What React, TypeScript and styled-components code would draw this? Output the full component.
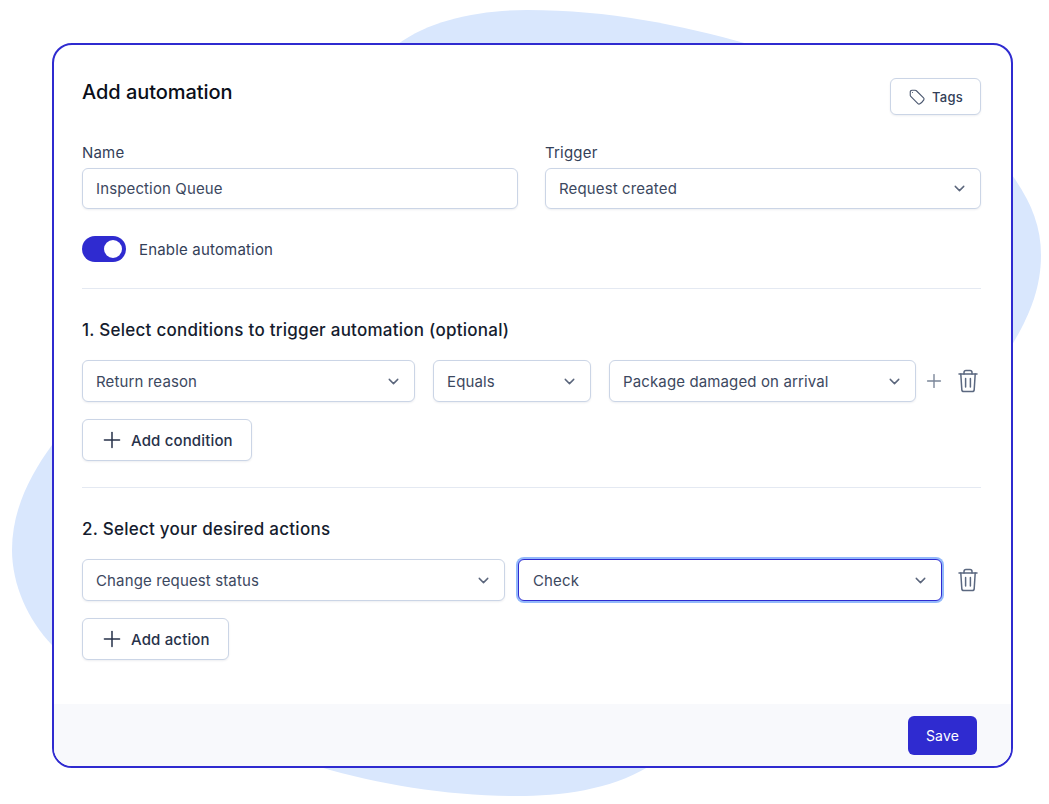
import React from "react";
import styled, { createGlobalStyle } from "styled-components";
import { ChevronDown, Plus } from "lucide-react";

const GlobalStyle = createGlobalStyle`
  html, body {
    margin: 0;
    padding: 0;
    background: #ffffff;
  }
  * {
    box-sizing: border-box;
  }
`;

const Page = styled.div`
  position: relative;
  width: 1049px;
  height: 804px;
  overflow: hidden;
  padding: 43px 36px 0 52px;
  font-family: Inter, "Liberation Sans", sans-serif;
`;

const Blob = styled.svg`
  position: absolute;
  left: 0;
  top: 0;
`;

const Card = styled.div`
  position: relative;
  width: 961px;
  height: 725px;
  display: flex;
  flex-direction: column;
  background: #ffffff;
  border: 2px solid #2f2bd0;
  border-radius: 20px;
  overflow: hidden;
`;

const Body = styled.div`
  flex: 1;
  padding: 33px 30px 0 28px;
`;

const TitleRow = styled.div`
  display: flex;
  justify-content: space-between;
  align-items: flex-start;
  height: 65px;
`;

const Title = styled.h1`
  margin: 0;
  padding-top: 1px;
  font-size: 20px;
  line-height: 26px;
  font-weight: 500;
  letter-spacing: -0.05px;
  color: #0b0f19;
`;

const TagsButton = styled.button`
  display: flex;
  align-items: center;
  justify-content: center;
  gap: 6px;
  width: 91px;
  height: 37px;
  padding: 0;
  background: #ffffff;
  border: 1px solid #cbd5e6;
  border-radius: 6px;
  box-shadow: 0 1px 2px rgba(30, 41, 80, 0.08);
  font-family: inherit;
  font-size: 13px;
  font-weight: 500;
  letter-spacing: 0.2px;
  color: #334058;
  svg {
    color: #4b5870;
  }
`;

const FieldGrid = styled.div`
  display: grid;
  grid-template-columns: 436px 436px;
  column-gap: 27px;
`;

const Field = styled.label`
  display: flex;
  flex-direction: column;
  gap: 6px;
`;

const FieldLabel = styled.span`
  font-size: 15px;
  line-height: 19px;
  font-weight: 400;
  letter-spacing: 0.2px;
  color: #334058;
`;

const Control = styled.div<{ $width?: number; $height?: number; $focused?: boolean }>`
  display: flex;
  align-items: center;
  justify-content: space-between;
  flex: none;
  width: ${(p) => (p.$width ? `${p.$width}px` : "100%")};
  height: ${(p) => p.$height ?? 42}px;
  padding: 0 12px 0 ${(p) => (p.$focused ? 14 : 13)}px;
  background: #ffffff;
  border: ${(p) => (p.$focused ? "1.5px solid #2f2bd0" : "1px solid #cbd5e6")};
  border-radius: 6px;
  box-shadow: ${(p) =>
    p.$focused ? "0 0 0 2px #93b9fb" : "0 1px 2px rgba(30, 41, 80, 0.08)"};
  font-size: 15px;
  letter-spacing: 0.13px;
  color: #3c4860;
  svg {
    color: #5b667c;
    flex: none;
  }
`;

const ToggleRow = styled.div`
  display: flex;
  align-items: center;
  gap: 13px;
  margin-top: 27px;
  font-size: 15px;
  letter-spacing: 0.18px;
  color: #334058;
`;

const Toggle = styled.span`
  position: relative;
  display: block;
  width: 44px;
  height: 26px;
  border-radius: 13px;
  background: #2f2bd0;
  &::after {
    content: "";
    position: absolute;
    right: 4px;
    top: 4px;
    width: 18px;
    height: 18px;
    border-radius: 50%;
    background: #ffffff;
  }
`;

const Divider = styled.hr`
  margin: 26px 0 0;
  border: 0;
  border-top: 1px solid #e4e9f2;
`;

const Section = styled.section`
  padding-top: 30px;
`;

const SectionTitle = styled.h2`
  margin: 0 0 19px;
  font-size: 17px;
  line-height: 22px;
  font-weight: 500;
  letter-spacing: 0.25px;
  color: #151c2e;
`;

const Row = styled.div<{ $gap: number }>`
  display: flex;
  align-items: center;
  gap: ${(p) => p.$gap}px;
`;

const AddButton = styled.button`
  display: flex;
  align-items: center;
  gap: 6px;
  height: 42px;
  margin-top: 17px;
  padding: 0 18px 0 16px;
  background: #ffffff;
  border: 1px solid #cbd5e6;
  border-radius: 6px;
  box-shadow: 0 1px 2px rgba(30, 41, 80, 0.08);
  font-family: inherit;
  font-size: 15px;
  font-weight: 500;
  letter-spacing: 0.15px;
  color: #27324a;
`;

const RowPlus = styled.span`
  display: flex;
  margin: 0 -10px 0 -11px;
  color: #7a8598;
`;

const TrashButton = styled.span`
  display: flex;
  margin-left: auto;
  margin-right: 3px;
  color: #5b6880;
`;

const Footer = styled.div`
  display: flex;
  justify-content: flex-end;
  height: 62px;
  padding: 12px 34px 0 0;
  background: #f8f9fc;
`;

const SaveButton = styled.button`
  width: 69px;
  height: 39px;
  background: #2f2bd0;
  border: 0;
  border-radius: 6px;
  font-family: inherit;
  font-size: 14px;
  font-weight: 400;
  letter-spacing: 0.2px;
  color: #ffffff;
`;

const TagIcon = () => (
  <svg width="18" height="18" viewBox="0 0 24 24" fill="none" stroke="currentColor" strokeWidth="1.5" strokeLinecap="round" strokeLinejoin="round">
    <path d="M9.568 3H5.25A2.25 2.25 0 0 0 3 5.25v4.318c0 .597.237 1.17.659 1.591l9.581 9.581c.699.699 1.78.872 2.607.33a18.095 18.095 0 0 0 5.223-5.223c.542-.827.369-1.908-.33-2.607L11.16 3.66A2.25 2.25 0 0 0 9.568 3Z" />
    <path d="M6 6h.008v.008H6V6Z" />
  </svg>
);

const TrashIcon = () => (
  <svg width="20" height="24" viewBox="0 0 20 24" fill="none" stroke="currentColor" strokeWidth="1.5" strokeLinecap="round" strokeLinejoin="round">
    <path d="M1 5h18" />
    <path d="M6 5V3.5A2 2 0 0 1 8 1.5h4a2 2 0 0 1 2 2V5" />
    <path d="M2.8 5l1 15.6a2 2 0 0 0 2 1.9h8.4a2 2 0 0 0 2-1.9l1-15.6" />
    <path d="M7.6 9.5v8.5M12.4 9.5v8.5" />
  </svg>
);

const Select = ({ value, width, height, focused }: { value: string; width?: number; height?: number; focused?: boolean }) => (
  <Control $width={width} $height={height} $focused={focused}>
    {value}
    <ChevronDown size={17} strokeWidth={2} />
  </Control>
);

export default function App() {
  return (
    <Page>
      <GlobalStyle />
      <Blob width="1049" height="804" viewBox="0 0 1049 804">
        <path
          fill="#d9e7fd"
          d="M398 44 C430 20 480 10 527 10 C610 10 680 25 748 44 L1012 175 C1030 200 1041 225 1041 255 C1041 290 1028 318 1012 345 L648 767 C610 790 560 796 517 796 C450 796 380 785 320 767 L52 645 C28 620 12 585 12 550 C12 510 30 475 52 445 Z"
        />
      </Blob>
      <Card>
        <Body>
          <TitleRow>
            <Title>Add automation</Title>
            <TagsButton>
              <TagIcon />
              Tags
            </TagsButton>
          </TitleRow>
          <FieldGrid>
            <Field>
              <FieldLabel>Name</FieldLabel>
              <Control $height={41}>Inspection Queue</Control>
            </Field>
            <Field>
              <FieldLabel>Trigger</FieldLabel>
              <Select value="Request created" height={41} />
            </Field>
          </FieldGrid>
          <ToggleRow>
            <Toggle />
            Enable automation
          </ToggleRow>
          <Divider />
          <Section>
            <SectionTitle>1. Select conditions to trigger automation (optional)</SectionTitle>
            <Row $gap={18}>
              <Select value="Return reason" width={333} />
              <Select value="Equals" width={158} />
              <Select value="Package damaged on arrival" width={307} />
              <RowPlus>
                <Plus size={22} strokeWidth={1.5} />
              </RowPlus>
              <TrashButton>
                <TrashIcon />
              </TrashButton>
            </Row>
            <AddButton>
              <Plus size={26} strokeWidth={1.4} />
              Add condition
            </AddButton>
          </Section>
          <Divider />
          <Section>
            <SectionTitle>2. Select your desired actions</SectionTitle>
            <Row $gap={13}>
              <Select value="Change request status" width={423} />
              <Select value="Check" width={424} focused />
              <TrashButton>
                <TrashIcon />
              </TrashButton>
            </Row>
            <AddButton>
              <Plus size={26} strokeWidth={1.4} />
              Add action
            </AddButton>
          </Section>
        </Body>
        <Footer>
          <SaveButton>Save</SaveButton>
        </Footer>
      </Card>
    </Page>
  );
}
